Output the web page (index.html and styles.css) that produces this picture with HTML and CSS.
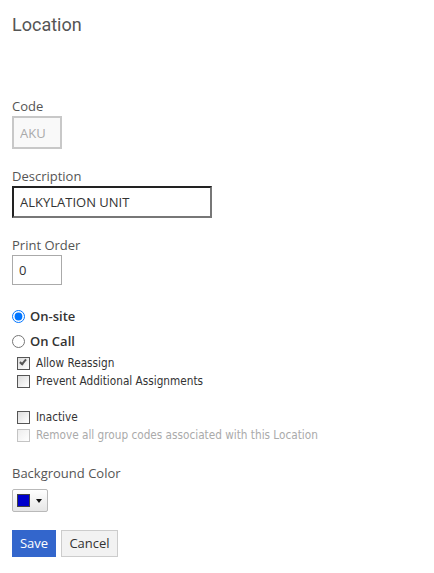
FILE: index.html
```html
<!DOCTYPE html>
<html>

<head>
    <meta charset="UTF-8">
    <meta name="viewport" content="width=device-width" />
    <title>Location</title>
    <link rel="stylesheet" href="styles.css">
</head>
<body>

    <h1 class="page-title">Location</h1>

    <form id="location-form">
        <div class="field field-code">
            <label class="field-label" for="code">Code</label>
            <input id="code" class="text-input input-code" type="text" value="AKU" disabled>
        </div>

        <div class="field">
            <label class="field-label" for="description">Description</label>
            <input id="description" class="text-input input-description" type="text" value="ALKYLATION UNIT">
        </div>

        <div class="field">
            <label class="field-label" for="print-order">Print Order</label>
            <input id="print-order" class="text-input input-order" type="text" value="0">
        </div>

        <div class="radio-group">
            <label class="radio-row">
                <input type="radio" name="kind" checked>
                <span>On-site</span>
            </label>
            <label class="radio-row">
                <input type="radio" name="kind">
                <span>On Call</span>
            </label>
        </div>

        <div class="check-group">
            <label class="check-row">
                <input class="check" type="checkbox" checked>
                <span>Allow Reassign</span>
            </label>
            <label class="check-row">
                <input class="check" type="checkbox">
                <span>Prevent Additional Assignments</span>
            </label>
        </div>

        <div class="check-group check-group-inactive">
            <label class="check-row">
                <input class="check" type="checkbox">
                <span>Inactive</span>
            </label>
            <label class="check-row disabled">
                <input class="check" type="checkbox" disabled>
                <span>Remove all group codes associated with this Location</span>
            </label>
        </div>

        <div class="field field-color">
            <div class="field-label">Background Color</div>
            <button type="button" class="color-picker">
                <span class="swatch"></span>
                <span class="caret"></span>
            </button>
        </div>

        <div class="actions">
            <button type="submit" class="btn btn-primary">Save</button>
            <button type="button" class="btn btn-default">Cancel</button>
        </div>
    </form>

</body>
</html>
```

FILE: styles.css
```css
html {
    box-sizing: border-box;
}

*,
*:before,
*:after {
    box-sizing: inherit;
}

body {
    margin: 0;
    padding: 14px 12px 0 12px;
    background-color: white;
    font-family: "Open Sans", sans-serif;
    font-size: 13px;
    color: #555;
}

.page-title {
    margin: 0;
    font-family: Roboto, sans-serif;
    font-size: 18px;
    font-weight: 400;
    line-height: 22px;
    color: #555;
}

form {
    margin: 0;
}

.field {
    display: flex;
    flex-direction: column;
    align-items: flex-start;
    margin-top: 18px;
}

.field-code {
    margin-top: 61px;
}

.field-label {
    line-height: 18px;
    margin-bottom: 1px;
}

.text-input {
    font-family: "Open Sans", sans-serif;
    font-size: 13px;
    color: #333;
    margin: 0;
    outline: none;
    background: white;
}

.input-code {
    width: 50px;
    height: 33px;
    padding: 0 6px;
    border: 2px solid #c8c8c8;
    background: #f9f9f9;
    color: #aaa;
}

.input-description {
    width: 200px;
    height: 32px;
    padding: 0 6px;
    border: 2px solid;
    border-color: #222 #777 #777 #222;
}

.input-order {
    width: 50px;
    height: 30px;
    padding: 0 6px;
    border: 1px solid #aaa;
}

.radio-group {
    margin-top: 22px;
    display: flex;
    flex-direction: column;
    gap: 7px;
}

.radio-row {
    display: flex;
    align-items: center;
    gap: 5px;
    height: 18px;
    font-weight: 600;
    color: #333;
}

.radio-row input {
    width: 13px;
    height: 13px;
    margin: 0;
    accent-color: #0075ff;
}

.check-group {
    margin-top: 4px;
    padding-left: 5px;
    display: flex;
    flex-direction: column;
}

.check-group-inactive {
    margin-top: 18px;
}

.check-row {
    display: flex;
    align-items: center;
    gap: 6px;
    height: 18px;
    font-family: "DejaVu Sans Condensed", "DejaVu Sans", sans-serif;
    font-size: 11.7px;
    color: #333;
}

.check {
    appearance: none;
    width: 13px;
    height: 13px;
    margin: 0;
    border: 1px solid #555;
    background: linear-gradient(135deg, #dcdcdc, #ffffff);
    position: relative;
}

.check:checked::after {
    content: '';
    position: absolute;
    left: 3px;
    top: 0px;
    width: 4px;
    height: 7px;
    border: solid #555;
    border-width: 0 2px 2px 0;
    transform: rotate(40deg);
}

.check-row.disabled {
    color: #aaa;
}

.check-row.disabled .check {
    border-color: #c4c4c4;
    background: linear-gradient(135deg, #ededed, #ffffff);
}

.field-color {
    margin-top: 20px;
}

.field-color .field-label {
    margin-bottom: 7px;
}

.color-picker {
    display: flex;
    align-items: center;
    gap: 6px;
    width: 36px;
    height: 23px;
    margin: 0;
    padding: 0 0 0 4px;
    border: 1px solid #b9b9b9;
    border-radius: 2px;
    background: linear-gradient(#ffffff, #e6e6e6);
}

.swatch {
    width: 13px;
    height: 13px;
    background: #0000cc;
    border: 1px solid #444;
}

.caret {
    width: 0;
    height: 0;
    border-left: 3px solid transparent;
    border-right: 3px solid transparent;
    border-top: 4px solid #111;
}

.actions {
    margin-top: 18px;
    display: flex;
    gap: 5px;
}

.btn {
    height: 27px;
    margin: 0;
    font-family: "Open Sans", sans-serif;
    font-size: 13px;
    line-height: 1;
}

.btn-primary {
    width: 44px;
    border: 1px solid #3366cc;
    background: #3366cc;
    color: white;
}

.btn-default {
    width: 57px;
    border: 1px solid #ccc;
    background: #f2f2f2;
    color: #333;
}
```
